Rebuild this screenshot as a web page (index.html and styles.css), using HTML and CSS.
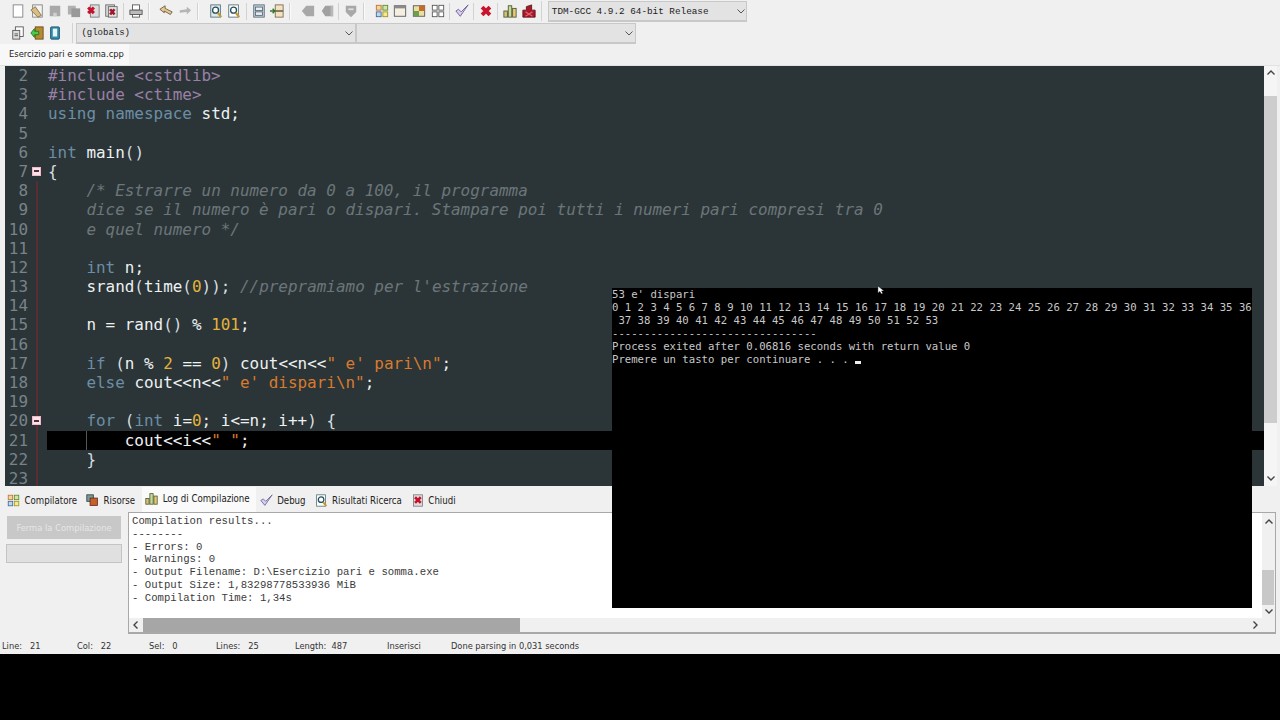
FILE: index.html
```html
<!DOCTYPE html>
<html lang="it">

<head>
    <meta charset="UTF-8">
    <title>Esercizio pari e somma.cpp - Dev-C++</title>
    <link rel="stylesheet" href="styles.css">
</head>

<body>
    <div class="app">
        <!-- toolbar 1 -->
        <div class="toolbar">
            <div class="tools">
                <svg class="ico" viewBox="0 0 16 16"><rect x="2.5" y="1" width="11" height="14" fill="#fff" stroke="#808080"/></svg>
                <svg class="ico" viewBox="0 0 16 16"><rect x="3" y="1" width="11" height="14" fill="#f4f4f4" stroke="#808080"/><path d="M1 7 L6 3 L13 13 L9 15 Z" fill="#d8bd84" stroke="#8a6d3a"/></svg>
                <svg class="ico" viewBox="0 0 16 16"><rect x="2" y="2" width="12" height="12" fill="#a9a9a9"/><rect x="6" y="10" width="4" height="4" fill="#d0d0d0"/></svg>
                <svg class="ico" viewBox="0 0 16 16"><rect x="1" y="2" width="9" height="10" fill="#b0b0b0"/><rect x="5" y="5" width="10" height="10" fill="#999"/></svg>
                <svg class="ico" viewBox="0 0 16 16"><rect x="5" y="1" width="10" height="14" fill="#ddd" stroke="#777"/><path d="M2.5 4 L9 10.5 M9 4 L2.5 10.5" stroke="#c8102e" stroke-width="3.6"/></svg>
                <svg class="ico" viewBox="0 0 16 16"><rect x="2" y="1" width="10" height="13" fill="#ddd" stroke="#666"/><rect x="5" y="3" width="10" height="12" fill="#e4e4e4" stroke="#666"/><path d="M7 6 L12 12 M12 6 L7 12" stroke="#9b1a2a" stroke-width="3"/></svg>
                <i class="sep"></i>
                <svg class="ico" viewBox="0 0 16 16"><rect x="4" y="1" width="8" height="6" fill="#fff" stroke="#555"/><rect x="1" y="7" width="14" height="5" fill="#bbb" stroke="#555"/><rect x="4" y="12" width="8" height="3" fill="#fff" stroke="#555"/></svg>
                <i class="sep wide"></i>
                <svg class="ico" viewBox="0 0 16 16"><path d="M1 6 L7 2 L7 5 L15 9 L13 12 L6 8 L6 10Z" fill="#e3c892" stroke="#6c5a3a"/></svg>
                <svg class="ico" viewBox="0 0 16 16"><path d="M15 7 L10 3 L10 6 L2 7 L2 10 L10 9 L10 12Z" fill="#b5b5b5"/></svg>
                <i class="sep wide"></i>
                <svg class="ico" viewBox="0 0 16 16"><rect x="2" y="1" width="11" height="14" fill="#dfe8ea" stroke="#55717a"/><circle cx="7.5" cy="7" r="3.4" fill="#fff" stroke="#24505c" stroke-width="1.5"/><path d="M10 10 L14 15" stroke="#c59a2c" stroke-width="2.4"/></svg>
                <svg class="ico" viewBox="0 0 16 16"><rect x="2" y="1" width="11" height="14" fill="#fff" stroke="#55717a"/><circle cx="7.5" cy="7" r="3.4" fill="#fff" stroke="#24505c" stroke-width="1.5"/><path d="M10 10 L14 15" stroke="#c59a2c" stroke-width="2.4"/></svg>
                <i class="sep"></i>
                <svg class="ico" viewBox="0 0 16 16"><rect x="2" y="1" width="12" height="14" fill="#c5d3dc" stroke="#5a6a76"/><rect x="4" y="3.5" width="8" height="4" fill="#e8eef2" stroke="#5a6a76"/><rect x="4" y="9" width="8" height="4" fill="#e8eef2" stroke="#5a6a76"/></svg>
                <svg class="ico" viewBox="0 0 16 16"><rect x="6" y="1" width="9" height="14" fill="#f2e2c0" stroke="#7a6a50"/><path d="M6 8 H15" stroke="#7a6a50" stroke-width="2"/><path d="M0 8 H5 M3 5.5 L5.5 8 L3 10.5" stroke="#2a7a2a" fill="none" stroke-width="1.6"/></svg>
                <i class="sep wide"></i>
                <svg class="ico" viewBox="0 0 16 16"><path d="M15 2 V14 H6 L1 8 L6 2Z" fill="#a8a8a8"/></svg>
                <svg class="ico" viewBox="0 0 16 16"><path d="M15 2 V14 H6 L2 8 L6 2Z" fill="#a0a0a0"/><rect x="12" y="2" width="3" height="12" fill="#b8b8b8"/></svg>
                <i class="sep"></i>
                <svg class="ico" viewBox="0 0 16 16"><path d="M2 2 H14 V9 L8 15 L2 9Z" fill="#a8a8a8"/><rect x="5" y="5" width="6" height="2" fill="#ddd"/></svg>
                <i class="sep wide"></i>
                <svg class="ico" viewBox="0 0 16 16"><rect x="1.5" y="1.5" width="5.5" height="5.5" fill="#f0d5a0" stroke="#c0702a"/><rect x="9" y="1.5" width="5.5" height="5.5" fill="#cfe6a8" stroke="#5a8a2a"/><rect x="1.5" y="9" width="5.5" height="5.5" fill="#bfd6ea" stroke="#3a6a9a"/><rect x="9" y="9" width="5.5" height="5.5" fill="#f2ea90" stroke="#a09020"/></svg>
                <svg class="ico" viewBox="0 0 16 16"><rect x="1.5" y="2" width="13" height="12" fill="#f4efe0" stroke="#555"/><rect x="1.5" y="2" width="13" height="3" fill="#8a8a8a"/></svg>
                <svg class="ico" viewBox="0 0 16 16"><rect x="1.5" y="2" width="13" height="12" fill="#e8e0a0" stroke="#555"/><rect x="8" y="2" width="6.5" height="6" fill="#c86a2a"/><rect x="2" y="8" width="6" height="6" fill="#6aa04a"/></svg>
                <svg class="ico" viewBox="0 0 16 16"><rect x="1.5" y="1.5" width="5.5" height="5.5" fill="#fff" stroke="#555"/><rect x="9" y="1.5" width="5.5" height="5.5" fill="#fff" stroke="#555"/><rect x="1.5" y="9" width="5.5" height="5.5" fill="#fff" stroke="#555"/><rect x="9" y="9" width="5.5" height="5.5" fill="#fff" stroke="#555"/></svg>
                <i class="sep"></i>
                <svg class="ico" viewBox="0 0 16 16"><path d="M1 8 L6 14 L15 1 L7 9 L4 6Z" fill="#d8cfea" stroke="#6a5a9a"/></svg>
                <i class="sep"></i>
                <svg class="ico" viewBox="0 0 16 16"><path d="M3.5 3.5 L12.5 12.5 M12.5 3.5 L3.5 12.5" stroke="#c8152d" stroke-width="4.4"/></svg>
                <i class="sep"></i>
                <svg class="ico" viewBox="0 0 16 16"><rect x="1" y="8" width="4" height="7" fill="#d8c078" stroke="#4a5a30"/><rect x="6" y="2" width="4" height="13" fill="#c8d898" stroke="#4a5a30"/><rect x="11" y="5" width="4" height="10" fill="#e8c878" stroke="#4a5a30"/></svg>
                <svg class="ico" viewBox="0 0 16 16"><path d="M1 15 V7 L5 7 L5 3 L11 1 L11 7 L15 7 V15Z" fill="#a8182a" stroke="#5a1818"/><path d="M4 9 L12 14 M12 9 L4 14" stroke="#e0606a" stroke-width="1.4"/></svg>
            </div>
            <i class="sep tail"></i>
            <div class="combo compiler">
                <span>TDM-GCC 4.9.2 64-bit Release</span>
                <svg class="chev" viewBox="0 0 8 5"><path d="M.5 .5 L4 4 L7.5 .5" fill="none" stroke="#555"/></svg>
            </div>
        </div>

        <!-- toolbar 2 -->
        <div class="toolbar second">
            <div class="tools">
                <svg class="ico" viewBox="0 0 16 16"><rect x="5" y="1" width="9" height="11" fill="#fff" stroke="#555"/><rect x="2" y="5" width="8" height="10" fill="#ddd" stroke="#555"/><path d="M4 9 H8 M4 11 H8" stroke="#555"/></svg>
                <svg class="ico" viewBox="0 0 16 16"><rect x="6" y="1" width="9" height="14" fill="#b88a30" stroke="#6a4a18"/><path d="M1 8 L5 3 L5 6 H10 V10 H5 V13Z" fill="#4ec84e" stroke="#1a7a1a"/></svg>
                <svg class="ico" viewBox="0 0 16 16"><rect x="3" y="1" width="10" height="14" rx="1" fill="#2e8fb0" stroke="#1d4a60"/><rect x="5.5" y="3" width="5" height="9" fill="#e8f4f8"/></svg>
                <i class="sep gap"></i>
            </div>
            <div class="combo globals">
                <span>(globals)</span>
                <svg class="chev" viewBox="0 0 8 5"><path d="M.5 .5 L4 4 L7.5 .5" fill="none" stroke="#555"/></svg>
            </div>
            <div class="combo members">
                <svg class="chev" viewBox="0 0 8 5"><path d="M.5 .5 L4 4 L7.5 .5" fill="none" stroke="#555"/></svg>
            </div>
        </div>

        <div class="filetabs"><span class="filetab">Esercizio pari e somma.cpp</span></div>

        <!-- editor -->
        <div class="editor">
            <div class="code">
                <div class="fold-line"></div>
                <div class="ln"><b>2</b><span class="pp">#include &lt;cstdlib&gt;</span></div>
                <div class="ln"><b>3</b><span class="pp">#include &lt;ctime&gt;</span></div>
                <div class="ln"><b>4</b><span class="kw">using namespace</span> std;</div>
                <div class="ln"><b>5</b></div>
                <div class="ln"><b>6</b><span class="kw">int</span> main<span class="op">()</span></div>
                <div class="ln"><b>7</b><i class="fold"></i><span class="op">{</span></div>
                <div class="ln"><b>8</b>    <span class="cm">/* Estrarre un numero da 0 a 100, il programma</span></div>
                <div class="ln"><b>9</b>    <span class="cm">dice se il numero è pari o dispari. Stampare poi tutti i numeri pari compresi tra 0</span></div>
                <div class="ln"><b>10</b>    <span class="cm">e quel numero */</span></div>
                <div class="ln"><b>11</b></div>
                <div class="ln"><b>12</b>    <span class="kw">int</span> n;</div>
                <div class="ln"><b>13</b>    srand<span class="op">(</span>time<span class="op">(</span><span class="num">0</span><span class="op">));</span> <span class="cm">//prepramiamo per l'estrazione</span></div>
                <div class="ln"><b>14</b></div>
                <div class="ln"><b>15</b>    n = rand<span class="op">()</span> % <span class="num">101</span>;</div>
                <div class="ln"><b>16</b></div>
                <div class="ln"><b>17</b>    <span class="kw">if</span> <span class="op">(</span>n % <span class="num">2</span> == <span class="num">0</span><span class="op">)</span> cout&lt;&lt;n&lt;&lt;<span class="str">" e' pari\n"</span>;</div>
                <div class="ln"><b>18</b>    <span class="kw">else</span> cout&lt;&lt;n&lt;&lt;<span class="str">" e' dispari\n"</span>;</div>
                <div class="ln"><b>19</b></div>
                <div class="ln"><b>20</b><i class="fold"></i>    <span class="kw">for</span> <span class="op">(</span><span class="kw">int</span> i=<span class="num">0</span>; i&lt;=n; i++<span class="op">)</span> <span class="op">{</span></div>
                <div class="ln active"><b>21</b><i class="guide"></i>        cout&lt;&lt;i&lt;&lt;<span class="str">" "</span>;</div>
                <div class="ln"><b>22</b>    <span class="op">}</span></div>
                <div class="ln"><b>23</b></div>
            </div>
            <div class="vscroll">
                <svg class="up" viewBox="0 0 8 5"><path d="M.5 4.5 L4 1 L7.5 4.5" fill="none" stroke="#444" stroke-width="1.4"/></svg>
                <span class="vthumb"></span>
                <svg class="down" viewBox="0 0 8 5"><path d="M.5 .5 L4 4 L7.5 .5" fill="none" stroke="#444" stroke-width="1.4"/></svg>
            </div>
        </div>

        <!-- bottom panel -->
        <div class="tabs">
            <span class="tab"><svg viewBox="0 0 16 16"><rect x="1.5" y="1.5" width="5.5" height="5.5" fill="#f0d5a0" stroke="#c0702a"/><rect x="9" y="1.5" width="5.5" height="5.5" fill="#cfe6a8" stroke="#5a8a2a"/><rect x="1.5" y="9" width="5.5" height="5.5" fill="#bfd6ea" stroke="#3a6a9a"/><rect x="9" y="9" width="5.5" height="5.5" fill="#f2ea90" stroke="#a09020"/></svg>Compilatore</span>
            <span class="tab"><svg viewBox="0 0 16 16"><rect x="1" y="1" width="8" height="8" fill="#7a9a9a" stroke="#2a3a3a"/><rect x="5" y="5" width="9" height="9" fill="#c8602a" stroke="#5a2a1a"/></svg>Risorse</span>
            <span class="tab current"><svg viewBox="0 0 16 16"><rect x="1" y="8" width="4" height="7" fill="#d8c078" stroke="#4a5a30"/><rect x="6" y="2" width="4" height="13" fill="#c8d898" stroke="#4a5a30"/><rect x="11" y="5" width="4" height="10" fill="#e8c878" stroke="#4a5a30"/></svg>Log di Compilazione</span>
            <span class="tab"><svg viewBox="0 0 16 16"><path d="M1 8 L6 14 L15 1 L7 9 L4 6Z" fill="#d8cfea" stroke="#6a5a9a"/></svg>Debug</span>
            <span class="tab"><svg viewBox="0 0 16 16"><rect x="2" y="1" width="11" height="14" fill="#fff" stroke="#55717a"/><circle cx="7.5" cy="7" r="3.4" fill="#fff" stroke="#24505c" stroke-width="1.5"/><path d="M10 10 L14 15" stroke="#c59a2c" stroke-width="2.4"/></svg>Risultati Ricerca</span>
            <span class="tab"><svg viewBox="0 0 16 16"><rect x="3" y="1" width="11" height="14" fill="#ddd" stroke="#777"/><path d="M5 4 L12 11 M12 4 L5 11" stroke="#c8102e" stroke-width="3.2"/></svg>Chiudi</span>
        </div>

        <div class="panel">
            <div class="side">
                <div class="btn">Ferma la Compilazione</div>
                <div class="progress"></div>
            </div>
            <div class="logbox">
                <pre class="log">Compilation results...
--------
- Errors: 0
- Warnings: 0
- Output Filename: D:\Esercizio pari e somma.exe
- Output Size: 1,83298778533936 MiB
- Compilation Time: 1,34s</pre>
                <div class="log-v">
                    <svg class="log-up" viewBox="0 0 8 5"><path d="M.5 4.5 L4 1 L7.5 4.5" fill="none" stroke="#444" stroke-width="1.4"/></svg>
                    <span class="log-thumb"></span>
                    <svg class="log-down" viewBox="0 0 8 5"><path d="M.5 .5 L4 4 L7.5 .5" fill="none" stroke="#444" stroke-width="1.4"/></svg>
                </div>
                <div class="log-h">
                    <svg class="harr" viewBox="0 0 5 8"><path d="M4.5 .5 L1 4 L4.5 7.5" fill="none" stroke="#444" stroke-width="1.4"/></svg>
                    <span class="h-thumb"></span>
                    <svg class="harr" viewBox="0 0 5 8"><path d="M.5 .5 L4 4 L.5 7.5" fill="none" stroke="#444" stroke-width="1.4"/></svg>
                </div>
            </div>
        </div>

        <div class="status">
            <span class="s1">Line:&nbsp;&nbsp; 21</span>
            <span class="s2">Col:&nbsp;&nbsp; 22</span>
            <span class="s3">Sel:&nbsp;&nbsp; 0</span>
            <span class="s4">Lines:&nbsp;&nbsp; 25</span>
            <span class="s5">Length:&nbsp; 487</span>
            <span class="s6">Inserisci</span>
            <span>Done parsing in 0,031 seconds</span>
        </div>
    </div>

    <!-- console window, sits over the IDE -->
    <div class="console">
        <pre>53 e' dispari
0 1 2 3 4 5 6 7 8 9 10 11 12 13 14 15 16 17 18 19 20 21 22 23 24 25 26 27 28 29 30 31 32 33 34 35 36
 37 38 39 40 41 42 43 44 45 46 47 48 49 50 51 52 53
--------------------------------
Process exited after 0.06816 seconds with return value 0
Premere un tasto per continuare . . . <i class="cursor"></i></pre>
    </div>

    <svg class="pointer" viewBox="0 0 10 10"><path d="M1 0 L1 8 L3 6 L5 9 L6.5 8 L5 5.5 L8 5.5Z" fill="#fff" stroke="#000" stroke-width=".5"/></svg>
</body>

</html>
```

FILE: styles.css
```css
* {
    box-sizing: border-box;
}

html,
body {
    margin: 0;
    height: 720px;
    background: #000;
    overflow: hidden;
}

body {
    position: relative;
    font-family: "DejaVu Sans", "Noto Sans", sans-serif;
    font-stretch: condensed;
    font-size: 9.6px;
    color: #333;
}

.app {
    height: 654px;
    background: #f0f0f0;
    display: flex;
    flex-direction: column;
}

/* toolbars */
.toolbar {
    height: 22px;
    display: flex;
    align-items: center;
    padding-left: 11px;
    flex: none;
}

.tools {
    display: flex;
    align-items: center;
}

.ico {
    width: 14px;
    height: 14px;
    margin-left: 4.7px;
    flex: none;
}

.ico:first-child {
    margin-left: 0;
}

.sep {
    width: 1px;
    height: 17px;
    background: #d2d2d2;
    margin-left: 4.5px;
    flex: none;
}

.sep.wide {
    width: 2px;
    margin: 0 5px;
    border-right: 1px solid #fafafa;
}

.sep.tail {
    margin-left: 5px;
    margin-right: 6px;
    height: 20px;
}

.sep.gap {
    margin-left: 10px;
    height: 20px;
}

.combo {
    height: 21px;
    background: #e3e3e3;
    border: 1px solid #c8c8c8;
    border-bottom-width: 2px;
    display: flex;
    align-items: center;
    justify-content: space-between;
    padding: 1px 2px 0 3px;
    font-family: "Liberation Mono", monospace;
    font-size: 9.33px;
    color: #222;
}

.chev {
    width: 8px;
    height: 5px;
}

.compiler {
    width: 199px;
    padding-right: 1px;
}

.globals {
    width: 280px;
    margin-left: 3px;
    padding-left: 4px;
    font-size: 9px;
}

.members {
    width: 280px;
    justify-content: flex-end;
}

/* file tab */
.filetabs {
    height: 22px;
    display: flex;
    align-items: stretch;
    border-bottom: 1px solid #e2e2e2;
    flex: none;
}

.filetab {
    background: #f8f8f8;
    padding: 4px 4px 0 9px;
    width: 129px;
    font-size: 9.3px;
    white-space: nowrap;
    color: #222;
}

/* editor */
.editor {
    height: 420px;
    margin: 0 4px 0 5px;
    display: flex;
    flex: none;
    background: #f0f0f0;
}

.code {
    position: relative;
    flex: 1;
    background: #2b3537;
    font-family: "DejaVu Sans Mono", monospace;
    font-stretch: normal;
    font-size: 15.95px;
    line-height: 19.2px;
    color: #eef1f2;
    overflow: hidden;
}

.ln {
    position: relative;
    height: 19.2px;
    padding-left: 43px;
    white-space: pre;
}

.ln b {
    position: absolute;
    left: 0;
    width: 23px;
    text-align: right;
    font-weight: normal;
    color: #78838a;
}

.ln.active {
    background: #000;
    margin-left: 42px;
    padding-left: 1px;
}

.ln.active b {
    left: -42px;
}

.guide {
    position: absolute;
    left: 39px;
    top: 0;
    bottom: 0;
    border-left: 1px solid #555;
}

.fold {
    position: absolute;
    left: 27px;
    top: 5px;
    width: 9px;
    height: 9px;
    background: #f8e4ea;
    border: 1px solid #f0b8c8;
}

.fold::after {
    content: "";
    position: absolute;
    left: 1px;
    right: 1px;
    top: 2.5px;
    height: 2px;
    background: #55303a;
}

.fold-line {
    position: absolute;
    left: 31px;
    top: 115px;
    bottom: 0;
    width: 4px;
    border-left: 2px solid #5c2d30;
}

.pp {
    color: #9a80a6;
}

.kw {
    color: #6b8ea6;
}

.op {
    color: #d6dee0;
}

.cm {
    color: #6c767a;
    font-style: italic;
}

.num {
    color: #e3b23c;
}

.str {
    color: #d97a2e;
}

.vscroll {
    position: relative;
    width: 13px;
    margin-right: -1px;
    background: #f5f5f5;
}

.vscroll .up,
.vscroll .down {
    position: absolute;
    left: 3px;
    width: 8px;
    height: 5px;
}

.vscroll .up {
    top: 4px;
}

.vscroll .down {
    bottom: 5px;
}

.vthumb {
    position: absolute;
    left: 0;
    right: 0;
    top: 30px;
    height: 327px;
    background: #cdcdcd;
}

/* bottom tabs */
.tabs {
    height: 26px;
    display: flex;
    align-items: center;
    padding: 2px 0 0 7px;
    flex: none;
    color: #222;
}

.tab {
    display: flex;
    align-items: center;
    gap: 4.5px;
    padding-right: 9px;
    white-space: nowrap;
}

.tab svg {
    width: 13px;
    height: 13px;
    flex: none;
}

.tab.current {
    background: #fafafa;
    align-self: stretch;
    margin: -1px 4px 0 -2px;
    padding: 0 6px 2px 3px;
}

/* log panel */
.panel {
    height: 122px;
    display: flex;
    flex: none;
}

.side {
    width: 128px;
    padding: 4px 6px 0 6px;
}

.btn {
    height: 23px;
    background: #c8c8c8;
    color: #e6e6e6;
    font-size: 9.3px;
    text-align: center;
    line-height: 23px;
    white-space: nowrap;
    overflow: hidden;
    margin: 0 1px;
}

.progress {
    height: 19px;
    margin-top: 5px;
    background: #e0e0e0;
    border: 1px solid #c4c4c4;
}

.logbox {
    position: relative;
    flex: none;
    width: 1148px;
    height: 122px;
    background: #fff;
    border: 1px solid #a8a8a8;
    border-bottom-width: 2px;
}

.log {
    margin: 0;
    padding: 2px 3px;
    font-family: "Liberation Mono", monospace;
    font-size: 10.67px;
    line-height: 12.8px;
    color: #3c3c3c;
}

.log-v {
    position: absolute;
    right: 0;
    top: 0;
    bottom: 0;
    width: 13px;
    background: #f0f0f0;
}

.log-up,
.log-down {
    position: absolute;
    left: 3px;
    width: 8px;
    height: 5px;
}

.log-up {
    top: 6px;
}

.log-down {
    bottom: 18px;
}

.log-thumb {
    position: absolute;
    left: 0;
    right: 1px;
    top: 57px;
    height: 35px;
    background: #c8c8c8;
}

.log-h {
    position: absolute;
    left: 0;
    right: 13px;
    bottom: 0;
    height: 14px;
    background: #f0f0f0;
    display: flex;
    align-items: center;
}

.harr {
    width: 5px;
    height: 8px;
    flex: none;
    margin: 0 5px 0 4px;
}

.log-h .harr:last-child {
    margin-left: auto;
    margin-right: 4px;
}

.h-thumb {
    width: 377px;
    height: 14px;
    background: #a6a6a6;
}

/* status bar */
.status {
    flex: 1;
    display: flex;
    align-items: center;
    padding: 2px 0 0 2px;
    font-size: 9.2px;
    color: #333;
    white-space: nowrap;
}

.status span {
    flex: none;
}

.s1 {
    width: 75px;
}

.s2 {
    width: 72px;
}

.s3 {
    width: 67px;
}

.s4 {
    width: 79px;
}

.s5 {
    width: 92px;
}

.s6 {
    width: 64px;
}

/* console */
.console {
    position: absolute;
    left: 612px;
    top: 288px;
    width: 640px;
    height: 320px;
    background: #000;
    overflow: hidden;
}

.console pre {
    margin: 0;
    padding-top: 1px;
    font-family: "DejaVu Sans Mono", monospace;
    font-stretch: normal;
    font-size: 10.64px;
    line-height: 12.9px;
    color: #c8c8c8;
}

.cursor {
    display: inline-block;
    width: 6px;
    height: 3px;
    background: #eee;
    vertical-align: -1px;
}

.pointer {
    position: absolute;
    left: 877px;
    top: 286px;
    width: 9px;
    height: 9px;
}
```
